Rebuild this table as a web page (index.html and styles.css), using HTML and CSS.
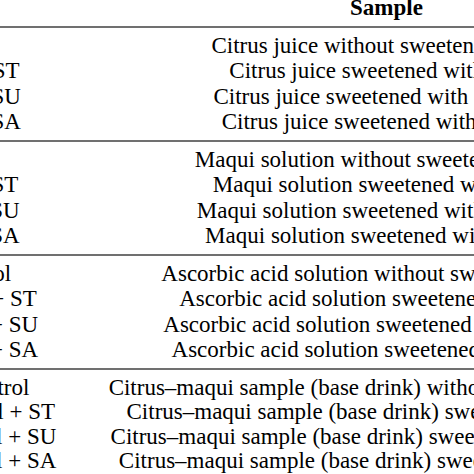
FILE: index.html
```html
<!DOCTYPE html>
<html lang="en">
<head>
<meta charset="utf-8">
<title>Samples</title>
<link rel="stylesheet" href="styles.css">
</head>
<body>
<table class="samples">
  <colgroup>
    <col class="col-code">
    <col class="col-sample">
  </colgroup>
  <thead>
    <tr>
      <th class="head-code">ID</th>
      <th class="head-sample">Sample</th>
    </tr>
  </thead>
  <tbody>
    <tr><td>CJ</td><td>Citrus juice without sweeteners added</td></tr>
    <tr><td>CJ1 + ST</td><td>Citrus juice sweetened with stevia</td></tr>
    <tr><td>CJ1 + SU</td><td>Citrus juice sweetened with sucralose</td></tr>
    <tr><td>CJ1 + SA</td><td>Citrus juice sweetened with sucrose</td></tr>
  </tbody>
  <tbody>
    <tr><td>MS</td><td>Maqui solution without sweeteners added</td></tr>
    <tr><td>MS + ST</td><td>Maqui solution sweetened with stevia</td></tr>
    <tr><td>MS + SU</td><td>Maqui solution sweetened with sucralose</td></tr>
    <tr><td>MS + SA</td><td>Maqui solution sweetened with sucrose</td></tr>
  </tbody>
  <tbody>
    <tr><td>Control</td><td>Ascorbic acid solution without sweeteners added</td></tr>
    <tr><td>Control + ST</td><td>Ascorbic acid solution sweetened with stevia</td></tr>
    <tr><td>Control + SU</td><td>Ascorbic acid solution sweetened with sucralose</td></tr>
    <tr><td>Control + SA</td><td>Ascorbic acid solution sweetened with sucrose</td></tr>
  </tbody>
  <tbody class="last-group">
    <tr><td>CM control</td><td>Citrus–maqui sample (base drink) without sweeteners added</td></tr>
    <tr><td>CM control + ST</td><td>Citrus–maqui sample (base drink) sweetened with stevia</td></tr>
    <tr><td>CM control + SU</td><td>Citrus–maqui sample (base drink) sweetened with sucralose</td></tr>
    <tr><td>CM control + SA</td><td>Citrus–maqui sample (base drink) sweetened with sucrose</td></tr>
  </tbody>
</table>
</body>
</html>
```
FILE: styles.css
```css
html, body {
  margin: 0;
  padding: 0;
  overflow: hidden;
  background: #ffffff;
}

body {
  width: 474px;
  height: 474px;
}

.samples {
  table-layout: fixed;
  border-collapse: separate;
  border-spacing: 0;
  width: 821px;
  margin: -5px 0 0 -124px;
  font-family: "Liberation Serif", "Times New Roman", serif;
  font-size: 23px;
  line-height: 25.5px;
  color: #000000;
}

.col-code {
  width: 200px;
}

.col-sample {
  width: 621px;
}

.samples th,
.samples td {
  padding: 0;
  text-align: center;
  white-space: nowrap;
  overflow: visible;
}

.samples th {
  font-weight: bold;
  padding-bottom: 5px;
}

.samples tbody tr:first-child td {
  border-top: 2px solid #707070;
  padding-top: 5px;
}

.samples tbody tr:last-child td {
  padding-bottom: 5px;
}

.samples .last-group td {
  line-height: 24.5px;
}

.samples .last-group tr:first-child td {
  padding-top: 6px;
}
```
